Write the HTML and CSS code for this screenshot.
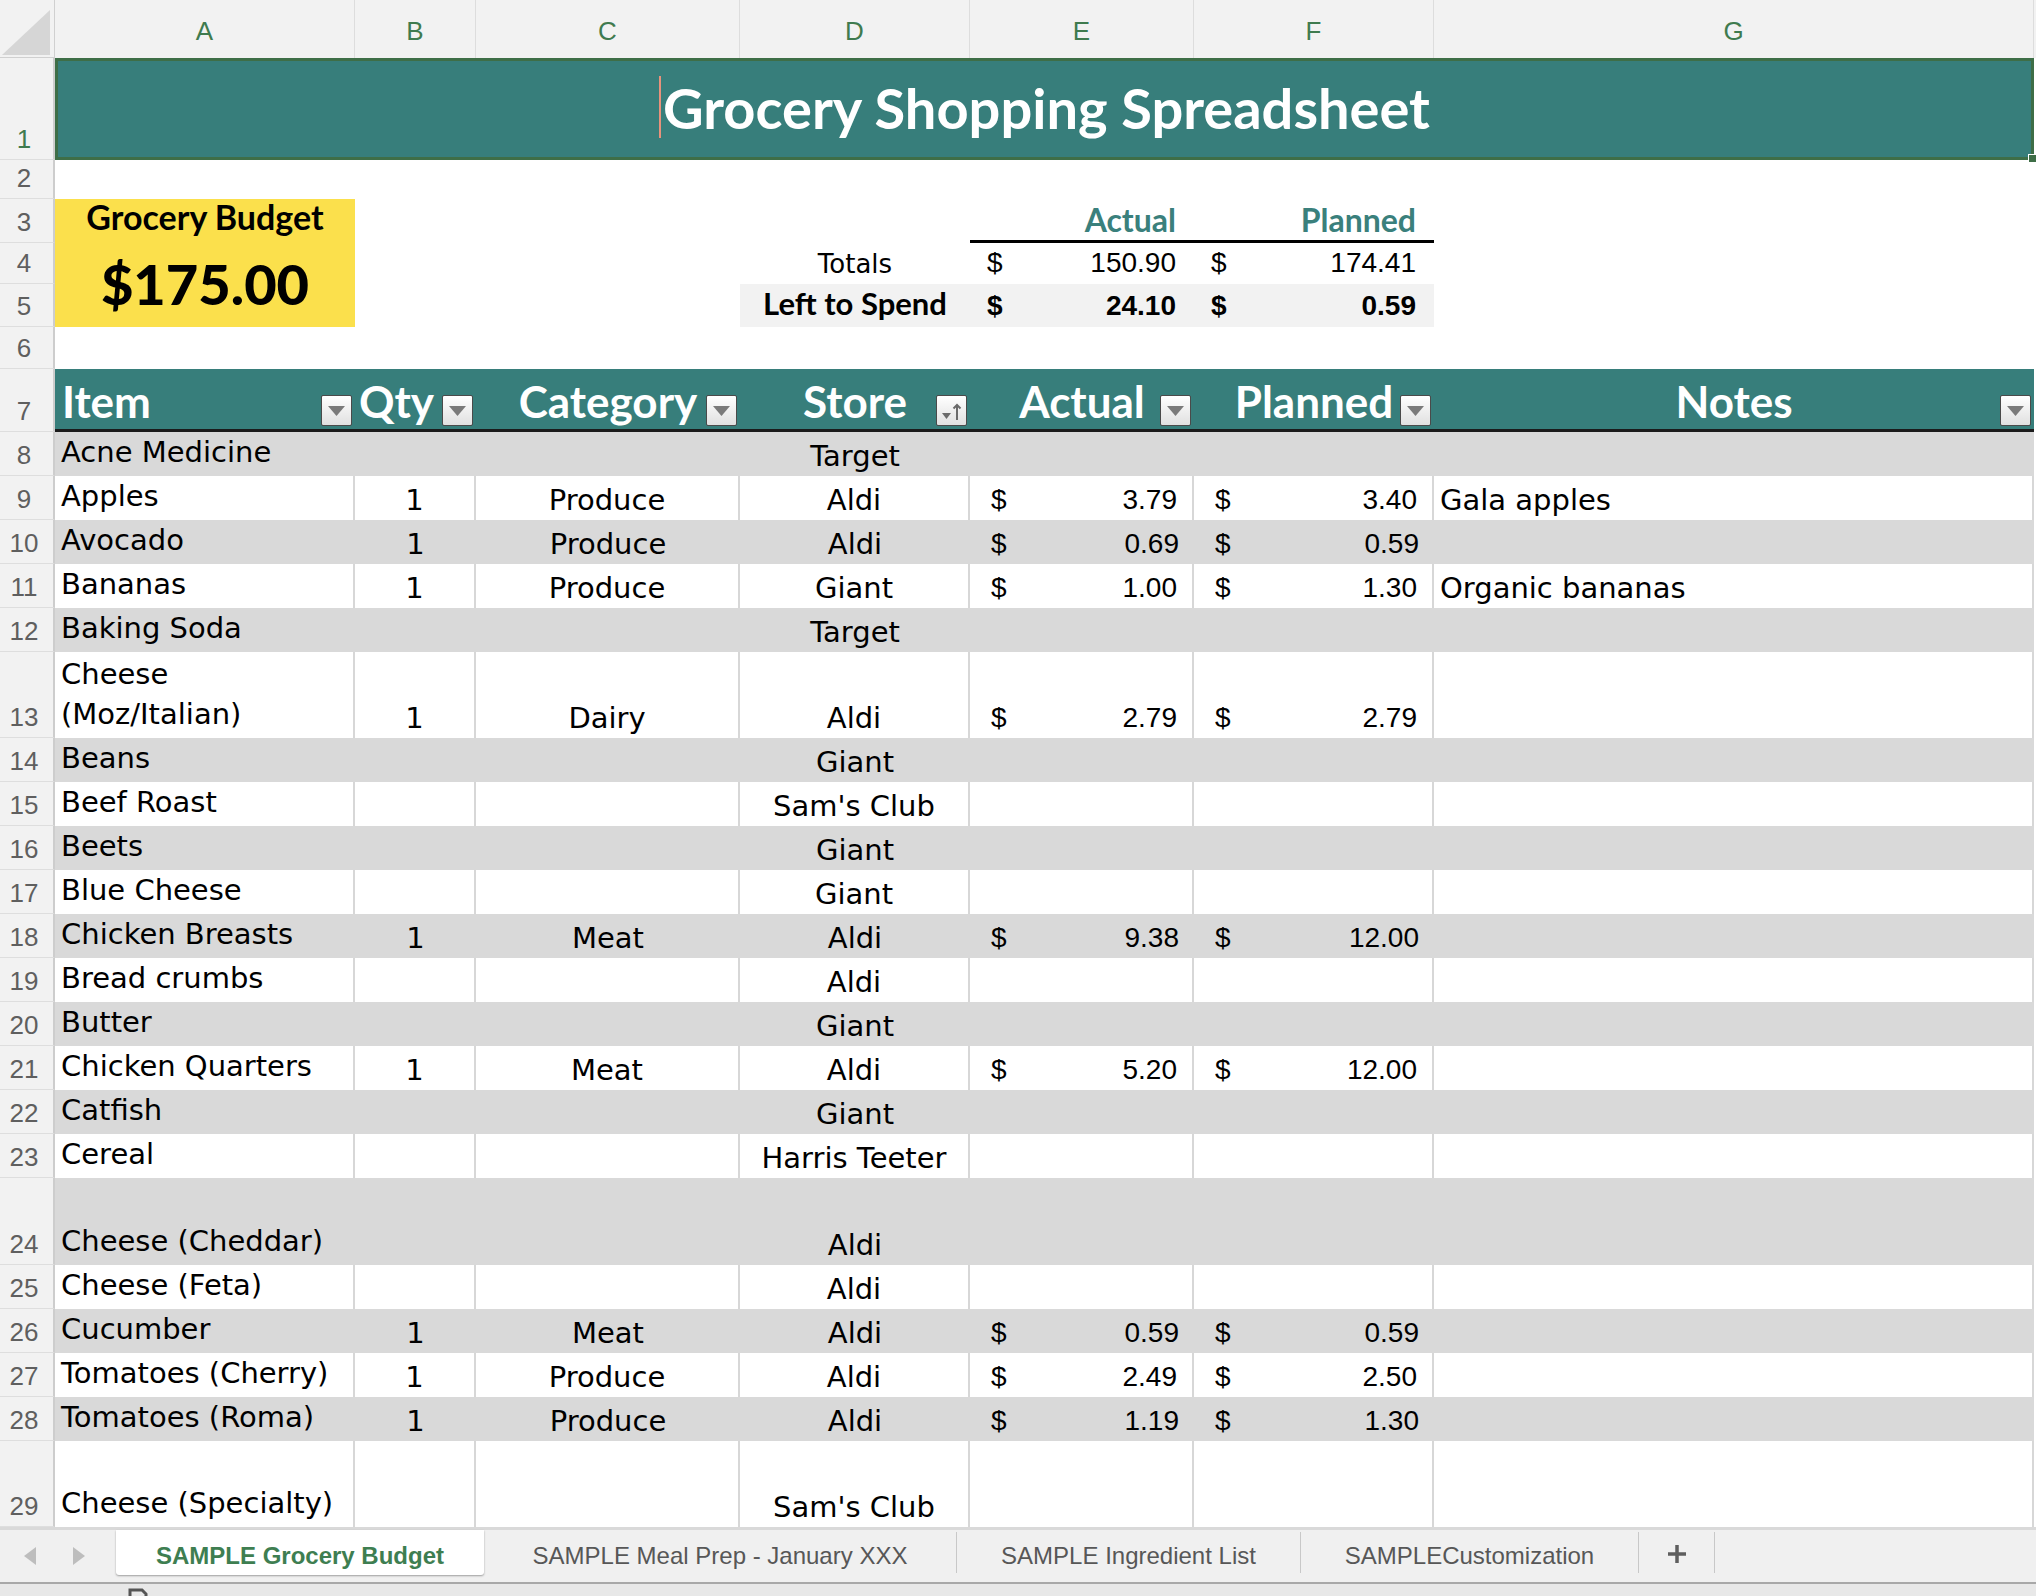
FILE: index.html
```html
<!DOCTYPE html>
<html lang="en">
<head>
<meta charset="utf-8">
<title>Grocery Shopping Spreadsheet</title>
<link rel="stylesheet" href="styles.css">
</head>
<body>
<div class="sheet">
  <div class="colhead">
    <div class="corner"><svg width="54" height="57" viewBox="0 0 54 57"><path d="M2 55 L50 10 L50 55 Z" fill="#d6d6d6"/></svg></div>
    <div class="col">A</div><div class="col">B</div><div class="col">C</div><div class="col">D</div><div class="col">E</div><div class="col">F</div><div class="col">G</div>
  </div>

  <div class="row r-title">
    <div class="rh sel">1</div>
    <div class="title"><span class="caret"></span><span>Grocery Shopping Spreadsheet</span><span class="handle"></span></div>
  </div>

  <div class="row r-blank2"><div class="rh">2</div></div>

  <div class="summary">
    <div class="rh">3</div>
    <div class="budget"><div class="budget-label">Grocery Budget</div><div class="budget-amt">$175.00</div></div>
    <div></div><div></div><div></div>
    <div class="s s-head">Actual</div>
    <div class="s s-head">Planned</div>
    <div></div>

    <div class="rh">4</div>
    <div></div><div></div>
    <div class="s s-label">Totals</div>
    <div class="s s-money"><span>$</span><span>150.90</span></div>
    <div class="s s-money"><span>$</span><span>174.41</span></div>
    <div></div>

    <div class="rh">5</div>
    <div></div><div></div>
    <div class="s s-label s-gray s-bold">Left to Spend</div>
    <div class="s s-money s-gray s-boldnum"><span>$</span><span>24.10</span></div>
    <div class="s s-money s-gray s-boldnum"><span>$</span><span>0.59</span></div>
    <div></div>
  </div>

  <div class="row r-blank6"><div class="rh">6</div></div>

  <div class="row r-head">
    <div class="rh">7</div>
    <div class="h h-item">Item<span class="fbtn"><svg width="17" height="10" viewBox="0 0 17 10"><path d="M0 0H17L8.5 10Z" fill="#7a7a7a"/></svg></span></div>
    <div class="h h-qty">Qty<span class="fbtn"><svg width="17" height="10" viewBox="0 0 17 10"><path d="M0 0H17L8.5 10Z" fill="#7a7a7a"/></svg></span></div>
    <div class="h">Category<span class="fbtn"><svg width="17" height="10" viewBox="0 0 17 10"><path d="M0 0H17L8.5 10Z" fill="#7a7a7a"/></svg></span></div>
    <div class="h">Store<span class="fbtn fbtn-sort"><svg width="24" height="20" viewBox="0 0 24 20"><path d="M2 12H11L6.5 18Z" fill="#6a6a6a"/><path d="M17 19V4M13.5 7.5L17 4L20.5 7.5" stroke="#6a6a6a" stroke-width="2" fill="none"/></svg></span></div>
    <div class="h">Actual<span class="fbtn"><svg width="17" height="10" viewBox="0 0 17 10"><path d="M0 0H17L8.5 10Z" fill="#7a7a7a"/></svg></span></div>
    <div class="h">Planned<span class="fbtn"><svg width="17" height="10" viewBox="0 0 17 10"><path d="M0 0H17L8.5 10Z" fill="#7a7a7a"/></svg></span></div>
    <div class="h">Notes<span class="fbtn"><svg width="17" height="10" viewBox="0 0 17 10"><path d="M0 0H17L8.5 10Z" fill="#7a7a7a"/></svg></span></div>
  </div>

  <div class="row g"><div class="rh">8</div><div class="c item">Acne Medicine</div><div class="c"></div><div class="c"></div><div class="c ctr">Target</div><div class="c"></div><div class="c"></div><div class="c"></div></div>
  <div class="row w"><div class="rh">9</div><div class="c item">Apples</div><div class="c ctr">1</div><div class="c ctr">Produce</div><div class="c ctr">Aldi</div><div class="c money"><span>$</span><span>3.79</span></div><div class="c money"><span>$</span><span>3.40</span></div><div class="c note">Gala apples</div></div>
  <div class="row g"><div class="rh">10</div><div class="c item">Avocado</div><div class="c ctr">1</div><div class="c ctr">Produce</div><div class="c ctr">Aldi</div><div class="c money"><span>$</span><span>0.69</span></div><div class="c money"><span>$</span><span>0.59</span></div><div class="c note"></div></div>
  <div class="row w"><div class="rh">11</div><div class="c item">Bananas</div><div class="c ctr">1</div><div class="c ctr">Produce</div><div class="c ctr">Giant</div><div class="c money"><span>$</span><span>1.00</span></div><div class="c money"><span>$</span><span>1.30</span></div><div class="c note">Organic bananas</div></div>
  <div class="row g"><div class="rh">12</div><div class="c item">Baking Soda</div><div class="c"></div><div class="c"></div><div class="c ctr">Target</div><div class="c"></div><div class="c"></div><div class="c"></div></div>
  <div class="row w tall"><div class="rh">13</div><div class="c item">Cheese<br>(Moz/Italian)</div><div class="c ctr">1</div><div class="c ctr">Dairy</div><div class="c ctr">Aldi</div><div class="c money"><span>$</span><span>2.79</span></div><div class="c money"><span>$</span><span>2.79</span></div><div class="c note"></div></div>
  <div class="row g"><div class="rh">14</div><div class="c item">Beans</div><div class="c"></div><div class="c"></div><div class="c ctr">Giant</div><div class="c"></div><div class="c"></div><div class="c"></div></div>
  <div class="row w"><div class="rh">15</div><div class="c item">Beef Roast</div><div class="c"></div><div class="c"></div><div class="c ctr">Sam's Club</div><div class="c"></div><div class="c"></div><div class="c"></div></div>
  <div class="row g"><div class="rh">16</div><div class="c item">Beets</div><div class="c"></div><div class="c"></div><div class="c ctr">Giant</div><div class="c"></div><div class="c"></div><div class="c"></div></div>
  <div class="row w"><div class="rh">17</div><div class="c item">Blue Cheese</div><div class="c"></div><div class="c"></div><div class="c ctr">Giant</div><div class="c"></div><div class="c"></div><div class="c"></div></div>
  <div class="row g"><div class="rh">18</div><div class="c item">Chicken Breasts</div><div class="c ctr">1</div><div class="c ctr">Meat</div><div class="c ctr">Aldi</div><div class="c money"><span>$</span><span>9.38</span></div><div class="c money"><span>$</span><span>12.00</span></div><div class="c"></div></div>
  <div class="row w"><div class="rh">19</div><div class="c item">Bread crumbs</div><div class="c"></div><div class="c"></div><div class="c ctr">Aldi</div><div class="c"></div><div class="c"></div><div class="c"></div></div>
  <div class="row g"><div class="rh">20</div><div class="c item">Butter</div><div class="c"></div><div class="c"></div><div class="c ctr">Giant</div><div class="c"></div><div class="c"></div><div class="c"></div></div>
  <div class="row w"><div class="rh">21</div><div class="c item">Chicken Quarters</div><div class="c ctr">1</div><div class="c ctr">Meat</div><div class="c ctr">Aldi</div><div class="c money"><span>$</span><span>5.20</span></div><div class="c money"><span>$</span><span>12.00</span></div><div class="c"></div></div>
  <div class="row g"><div class="rh">22</div><div class="c item">Catfish</div><div class="c"></div><div class="c"></div><div class="c ctr">Giant</div><div class="c"></div><div class="c"></div><div class="c"></div></div>
  <div class="row w"><div class="rh">23</div><div class="c item">Cereal</div><div class="c"></div><div class="c"></div><div class="c ctr">Harris Teeter</div><div class="c"></div><div class="c"></div><div class="c"></div></div>
  <div class="row g tall tall-b"><div class="rh">24</div><div class="c item">Cheese (Cheddar)</div><div class="c"></div><div class="c"></div><div class="c ctr">Aldi</div><div class="c"></div><div class="c"></div><div class="c"></div></div>
  <div class="row w"><div class="rh">25</div><div class="c item">Cheese (Feta)</div><div class="c"></div><div class="c"></div><div class="c ctr">Aldi</div><div class="c"></div><div class="c"></div><div class="c"></div></div>
  <div class="row g"><div class="rh">26</div><div class="c item">Cucumber</div><div class="c ctr">1</div><div class="c ctr">Meat</div><div class="c ctr">Aldi</div><div class="c money"><span>$</span><span>0.59</span></div><div class="c money"><span>$</span><span>0.59</span></div><div class="c"></div></div>
  <div class="row w"><div class="rh">27</div><div class="c item">Tomatoes (Cherry)</div><div class="c ctr">1</div><div class="c ctr">Produce</div><div class="c ctr">Aldi</div><div class="c money"><span>$</span><span>2.49</span></div><div class="c money"><span>$</span><span>2.50</span></div><div class="c"></div></div>
  <div class="row g"><div class="rh">28</div><div class="c item">Tomatoes (Roma)</div><div class="c ctr">1</div><div class="c ctr">Produce</div><div class="c ctr">Aldi</div><div class="c money"><span>$</span><span>1.19</span></div><div class="c money"><span>$</span><span>1.30</span></div><div class="c"></div></div>
  <div class="row w tall"><div class="rh">29</div><div class="c item">Cheese (Specialty)</div><div class="c"></div><div class="c"></div><div class="c ctr">Sam's Club</div><div class="c"></div><div class="c"></div><div class="c"></div></div>
</div>

<div class="tabbar">
  <div class="nav">
    <svg width="14" height="18" viewBox="0 0 14 18"><path d="M13 0V18L1 9Z" fill="#bdbdbd"/></svg>
    <svg width="14" height="18" viewBox="0 0 14 18"><path d="M1 0V18L13 9Z" fill="#bdbdbd"/></svg>
  </div>
  <div class="tab tab-on">SAMPLE Grocery Budget</div>
  <div class="tab tab-meal">SAMPLE Meal Prep - January XXX</div>
  <div class="tab tab-ingr">SAMPLE Ingredient List</div>
  <div class="tab tab-cust">SAMPLECustomization</div>
  <div class="tab tab-add"><svg width="20" height="20" viewBox="0 0 20 20"><path d="M10 1V19M1 10H19" stroke="#5e5e5e" stroke-width="3.5"/></svg></div>
</div>
<div class="status"><svg width="26" height="8" viewBox="0 0 26 8"><path d="M2 8V2H14L18 6V8" stroke="#555" stroke-width="3" fill="none"/></svg></div>
</body>
</html>
```

FILE: styles.css
```css
* { box-sizing: border-box; }

html, body {
  margin: 0;
  padding: 0;
  background: #ffffff;
}

body {
  width: 2036px;
  height: 1596px;
  overflow: hidden;
  font-family: "DejaVu Sans", sans-serif;
  color: #000;
}

.sheet { width: 2036px; }

.colhead,
.row,
.summary {
  display: grid;
  grid-template-columns: 55px 300px 121px 264px 230px 224px 240px 600px;
}

/* default data row heights */
.row { height: 44px; }
.row.tall { height: 86px; }
.row.tall-b { height: 87px; }

/* column header strip */
.colhead {
  height: 58px;
  background: #f2f2f2;
}
.corner {
  border-right: 1px solid #d0d0d0;
  border-bottom: 1px solid #d0d0d0;
}
.corner svg { display: block; }
.col {
  display: flex;
  align-items: center;
  justify-content: center;
  padding-top: 4px;
  border-right: 1px solid #dddddd;
  font: 26px "Liberation Sans", sans-serif;
  color: #3f7b4f;
}

/* row headers */
.rh {
  background: #f2f2f2;
  border-right: 2px solid #cdcdcd;
  border-bottom: 1px solid #dedede;
  display: flex;
  align-items: flex-end;
  justify-content: center;
  padding: 0 5px 6px 0;
  font: 26px/28px "Liberation Sans", sans-serif;
  color: #5f5f5f;
}
.rh.sel { color: #3f7b4f; }

/* title row */
.row.r-title { height: 102px; }
.title {
  grid-column: 2 / 9;
  position: relative;
  background: #377e7b;
  border: 3px solid #3e6e47;
  display: flex;
  align-items: center;
  justify-content: center;
  padding-bottom: 4px;
  font: 700 56px "Lato", sans-serif;
  color: #ffffff;
  white-space: nowrap;
}
.caret {
  display: inline-block;
  width: 2px;
  height: 62px;
  margin-right: 2px;
  background: #e8927c;
}
.handle {
  position: absolute;
  right: -6px;
  bottom: -6px;
  width: 9px;
  height: 9px;
  background: #3e6e47;
  border: 1px solid #ffffff;
}

.row.r-blank2 { height: 39px; }
.row.r-blank6 { height: 42px; }

/* summary block (rows 3-5) */
.summary { grid-template-rows: 44px 41px 43px; }
.budget {
  grid-row: span 3;
  background: #fbe04c;
  display: flex;
  flex-direction: column;
  align-items: center;
  font-family: "Lato", sans-serif;
}
.budget-label { font: 700 34px/36px "Lato", sans-serif; }
.budget-amt { font: 900 56px/60px "Lato", sans-serif; margin-top: 19px; }

.s {
  display: flex;
  align-items: flex-end;
  white-space: nowrap;
}
.s-head {
  justify-content: flex-end;
  padding: 0 18px 1px 0;
  font: 700 32px/38px "Lato", sans-serif;
  color: #3a807c;
  border-bottom: 3px solid #000;
}
.s-label {
  justify-content: center;
  padding-bottom: 5px;
  font: 26px/30px "DejaVu Sans", sans-serif;
}
.s-money {
  justify-content: space-between;
  padding: 0 18px 5px 17px;
  font: 28px/32px "Liberation Sans", sans-serif;
}
.s-gray { background: #f2f2f2; }
.s-bold { font: 700 31px/37px "Lato", sans-serif; }
.s-boldnum { font-weight: 700; }

/* table header row */
.row.r-head { height: 63px; }
.h {
  position: relative;
  display: flex;
  align-items: flex-end;
  justify-content: center;
  padding-bottom: 3px;
  background: #377e7b;
  border-bottom: 3px solid #1b1b1b;
  font: 700 44px/49px "Lato", sans-serif;
  color: #ffffff;
  white-space: nowrap;
}
.h-item { justify-content: flex-start; padding-left: 7px; }
.h-qty { padding-right: 38px; }

.fbtn {
  position: absolute;
  right: 3px;
  bottom: 3px;
  width: 31px;
  height: 31px;
  border: 1px solid #4a4a4a;
  border-radius: 2px;
  background: linear-gradient(#ffffff, #e0e0e0);
  display: flex;
  align-items: flex-end;
  justify-content: center;
  padding-bottom: 9px;
}
.fbtn svg { display: block; }
.fbtn-sort { padding-bottom: 4px; }

/* data cells */
.c {
  display: flex;
  align-items: flex-end;
  padding-bottom: 3px;
  font: 29px/34px "DejaVu Sans", sans-serif;
  white-space: nowrap;
  min-width: 0;
}
.row.g .c { background: #d9d9d9; }
.row.w .c { background: #ffffff; border-right: 2px solid #d7d7d7; }

.c.ctr { justify-content: center; }
.c.item { padding: 0 0 4px 6px; line-height: 40px; }
.c.note { padding-left: 6px; }
.c.money {
  justify-content: space-between;
  padding: 0 15px 3px 21px;
  font-family: "Liberation Sans", sans-serif;
  font-size: 28px;
}

/* sheet tabs */
.tabbar {
  height: 55px;
  background: #f0f0f0;
  border-top: 3px solid #d9d9d9;
  display: flex;
  align-items: flex-start;
  font-family: "Liberation Sans", sans-serif;
}
.nav {
  width: 116px;
  display: flex;
  gap: 35px;
  padding: 17px 0 0 23px;
}
.nav svg { display: block; }
.tab {
  height: 41px;
  margin-top: 2px;
  border-right: 1px solid #c8c8c8;
  display: flex;
  align-items: center;
  justify-content: center;
  padding-top: 6px;
  font-size: 24px;
  color: #575757;
  white-space: nowrap;
}
.tab-on {
  width: 368px;
  height: 45px;
  margin-top: 0;
  border-right: 0;
  background: #ffffff;
  border-radius: 0 0 3px 3px;
  box-shadow: 0 1px 2px rgba(0, 0, 0, 0.35);
  font-weight: 700;
  color: #3e7e51;
}
.tab-meal { width: 473px; }
.tab-ingr { width: 344px; }
.tab-cust { width: 338px; }
.tab-add { width: 76px; padding-top: 2px; }

.status {
  height: 14px;
  background: #e8e8e8;
  border-top: 2px solid #a8a8a8;
  padding: 4px 0 0 128px;
}
.status svg { display: block; }
```
